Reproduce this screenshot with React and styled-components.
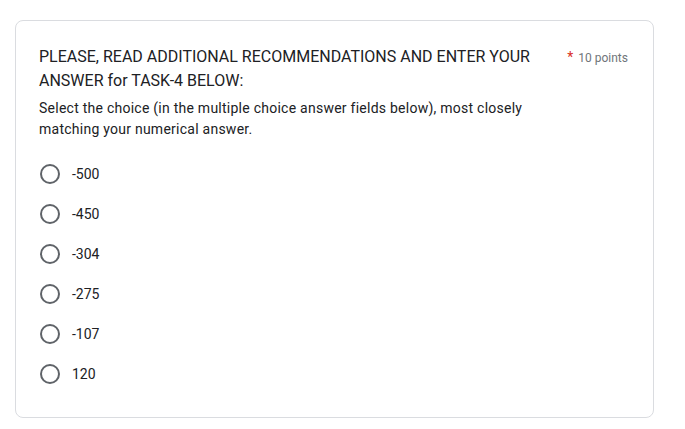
import React from "react";
import styled, { createGlobalStyle } from "styled-components";

const GlobalStyle = createGlobalStyle`
  html, body {
    margin: 0;
    padding: 0;
    background: #fff;
    font-family: Roboto, "Liberation Sans", Arial, sans-serif;
  }
`;

const Page = styled.div`
  padding: 20px 0 0 15px;
`;

const Card = styled.div`
  box-sizing: border-box;
  width: 639px;
  min-height: 396px;
  border: 1px solid #dadce0;
  border-radius: 8px;
  padding: 24px 23px 23px 23px;
  background: #fff;
`;

const Header = styled.div`
  display: flex;
  justify-content: space-between;
  align-items: flex-start;
`;

const HeaderText = styled.div`
  width: 516px;
`;

const Title = styled.div`
  font-size: 16px;
  line-height: 24px;
  color: #202124;
`;

const Description = styled.div`
  margin-top: 5px;
  font-size: 14px;
  line-height: 21px;
  letter-spacing: 0.25px;
  color: #202124;
`;

const Points = styled.div`
  display: flex;
  align-items: flex-start;
  gap: 5px;
  padding-top: 5px;
  margin-right: 2px;
  font-size: 12px;
  line-height: 16px;
  color: #70757a;
  white-space: nowrap;
`;

const Star = styled.span`
  color: #d93025;
  font-size: 14px;
  line-height: 14px;
`;

const Options = styled.div`
  display: flex;
  flex-direction: column;
  margin-top: 14px;
`;

const Option = styled.label`
  display: flex;
  align-items: center;
  height: 40px;
  gap: 12px;
  font-size: 14px;
  color: #202124;
  cursor: pointer;
`;

const Radio = styled.span`
  box-sizing: border-box;
  width: 20px;
  height: 20px;
  margin-left: 1px;
  border: 2px solid #5f6368;
  border-radius: 50%;
`;

const choices = ["-500", "-450", "-304", "-275", "-107", "120"];

export default function App() {
  return (
    <Page>
      <GlobalStyle />
      <Card>
        <Header>
          <HeaderText>
            <Title>
              PLEASE, READ ADDITIONAL RECOMMENDATIONS AND ENTER YOUR ANSWER for TASK-4 BELOW:
            </Title>
            <Description>
              Select the choice (in the multiple choice answer fields below), most closely matching your numerical
              answer.
            </Description>
          </HeaderText>
          <Points>
            <Star>*</Star>
            10 points
          </Points>
        </Header>
        <Options>
          {choices.map((c) => (
            <Option key={c}>
              <Radio />
              {c}
            </Option>
          ))}
        </Options>
      </Card>
    </Page>
  );
}
